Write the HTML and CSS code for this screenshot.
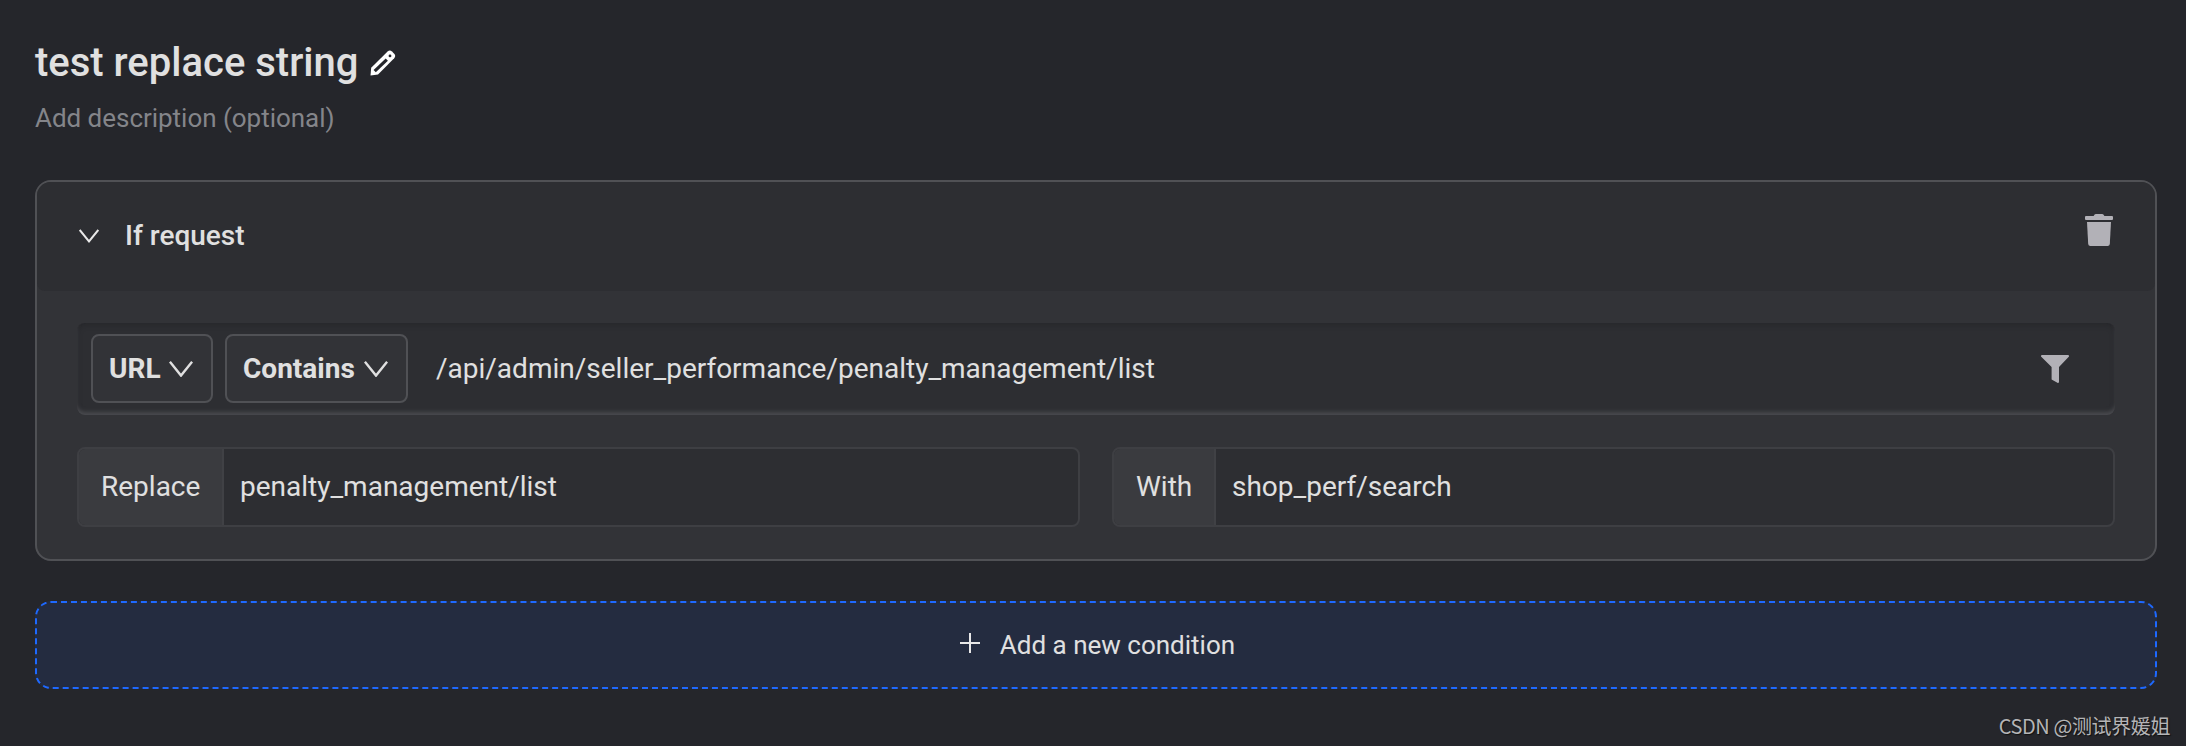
FILE: index.html
```html
<!DOCTYPE html>
<html>
<head>
  <meta charset="UTF-8" />
  <title>test replace string</title>
  <link rel="stylesheet" href="styles.css">
</head>
<body>
  <header class="rule-header">
    <div class="rule-name">
      <h1>test replace string</h1>
      <svg class="icon-edit" viewBox="0 0 26 26" width="26" height="26">
        <path d="M.5 25.4 L1.2 17.8 L17.6 1.6 Q19.8 -.4 22 1.6 L24.2 3.8 Q26.2 6 24.2 8.2 L8 24.4 Z" />
        <path class="slot" d="M4.7 21.2 L16.8 9.6" />
        <circle cx="20" cy="5.9" r="1.4" />
      </svg>
    </div>
    <div class="rule-description">Add description (optional)</div>
  </header>

  <section class="card">
    <div class="card-header">
      <svg class="icon-collapse" viewBox="0 0 20 14" width="20" height="14">
        <path d="M.7 1 L10 12.4 L19.3 1" />
      </svg>
      <h2>If request</h2>
      <svg class="icon-trash" viewBox="0 0 28 32" width="28" height="32">
        <path d="M1 2 H8.6 L9.6 .6 Q10 0 10.8 0 H17.2 Q18 0 18.4 .6 L19.4 2 H27 Q28 2 28 3 V5 Q28 6 27 6 H1 Q0 6 0 5 V3 Q0 2 1 2 Z" />
        <path d="M2 8 H26 L24.8 30 Q24.6 32 22.6 32 H5.4 Q3.4 32 3.2 30 Z" />
      </svg>
    </div>
    <div class="card-body">
      <div class="source">
        <button class="select select-key">URL
          <svg viewBox="0 0 24 16" width="24" height="16"><path d="M.9 .8 L12 14.6 L23.1 .8" /></svg>
        </button>
        <button class="select select-operator">Contains
          <svg viewBox="0 0 24 16" width="24" height="16"><path d="M.9 .8 L12 14.6 L23.1 .8" /></svg>
        </button>
        <span class="source-value">/api/admin/seller_performance/penalty_management/list</span>
        <svg class="icon-filter" viewBox="0 0 28 28" width="28" height="28">
          <path d="M1 0 H27 Q28 0 28 1 V1.6 L18 12 V27 Q17.6 28.4 16.4 27.8 L10.6 24.6 V12 L0 1.6 V1 Q0 0 1 0 Z" />
        </svg>
      </div>
      <div class="pairs">
        <div class="input-group">
          <span class="addon addon-replace">Replace</span>
          <span class="value">penalty_management/list</span>
        </div>
        <div class="input-group">
          <span class="addon addon-with">With</span>
          <span class="value">shop_perf/search</span>
        </div>
      </div>
    </div>
  </section>

  <button class="add-condition">
    <svg viewBox="0 0 20 20" width="20" height="20"><path d="M10 0 V20 M0 10 H20" /></svg>
    <span>Add a new condition</span>
  </button>

  <footer class="watermark">CSDN @测试界媛姐</footer>
</body>
</html>
```

FILE: styles.css
```css
* {
  box-sizing: border-box;
}
body {
  margin: 0;
  padding: 35px 29px 0 35px;
  height: 746px;
  overflow: hidden;
  background: #25262b;
  color: #e0e0e0;
  font-family: Roboto, "Noto Sans CJK SC", sans-serif;
  font-size: 28px;
}
h1, h2 {
  margin: 0;
  font-weight: 500;
}
button {
  margin: 0;
  font: inherit;
  color: inherit;
}
svg {
  display: block;
  flex-shrink: 0;
}

.rule-name {
  display: flex;
  align-items: center;
  height: 56px;
}
.rule-name > h1 {
  font-size: 40px;
  line-height: 56px;
}
.icon-edit {
  margin-left: 12px;
  fill: #fff;
}
.icon-edit > .slot {
  stroke: #25262b;
  stroke-width: 3.2;
}
.icon-edit > circle {
  fill: #25262b;
}
.rule-description {
  margin-top: 8px;
  font-size: 26px;
  line-height: 38px;
  letter-spacing: -0.03px;
  color: #84858a;
}

.card {
  margin: 43px 0 0;
  width: 2122px;
  height: 381px;
  border: 2px solid #505155;
  border-radius: 16px;
  background: #323337;
  overflow: hidden;
}
.card-header {
  display: flex;
  align-items: center;
  height: 109px;
  padding: 0 42px 2px;
  background: #2d2e32;
  border-radius: 0 0 8px 8px;
}
.card-header > h2 {
  margin-left: 26px;
  font-size: 28px;
  line-height: 40px;
}
.icon-collapse {
  fill: none;
  stroke: #e8e8e8;
  stroke-width: 2;
}
.icon-trash {
  margin: 0 0 12px auto;
  fill: #b2b1b7;
}
.card-body {
  padding: 32px 40px;
}

.source {
  display: flex;
  align-items: center;
  height: 92px;
  padding: 0 46px 1px 14px;
  border-radius: 8px;
  background: #2d2e32;
  box-shadow: inset 0 -4px 4px -1px #4a4b4f, inset 0 2px 6px rgba(0, 0, 0, 0.15);
}
.select {
  display: flex;
  align-items: center;
  height: 69px;
  margin-right: 12px;
  padding: 0 18px 0 16px;
  border: 2px solid #505155;
  border-radius: 8px;
  background: #323337;
  font-weight: 700;
}
.select > svg {
  margin: 0 0 0 auto;
  fill: none;
  stroke: #e0e0e0;
  stroke-width: 2.4;
}
.select-key {
  width: 122px;
}
.select-operator {
  width: 183px;
}
.source-value {
  margin-left: 16px;
}
.icon-filter {
  margin-left: auto;
  fill: #b2b1b7;
}

.pairs {
  display: grid;
  grid-template-columns: 1fr 1fr;
  gap: 32px;
  margin-top: 32px;
}
.input-group {
  display: flex;
  height: 80px;
  border: 2px solid #3e3f43;
  border-radius: 8px;
  background: #2d2e32;
  line-height: 76px;
  overflow: hidden;
}
.addon {
  padding-left: 22px;
  border-right: 2px solid #404145;
  background: #3a3b3f;
}
.addon-replace {
  width: 145px;
}
.addon-with {
  width: 102px;
}
.value {
  padding-left: 16px;
}

.add-condition {
  display: flex;
  align-items: center;
  justify-content: center;
  gap: 20px;
  width: 2122px;
  height: 88px;
  margin-top: 40px;
  padding: 0 0 0 3px;
  border: 2px dashed #1e69ff;
  border-radius: 16px;
  background: #242c40;
  font-size: 26px;
}
.add-condition > svg {
  margin-bottom: 4px;
  fill: none;
  stroke: #e8e8e8;
  stroke-width: 2;
}

.watermark {
  margin: 22px -13px 0 0;
  font-family: "Noto Sans CJK SC", sans-serif;
  font-size: 20px;
  line-height: 30px;
  letter-spacing: -0.4px;
  text-align: right;
  color: #b4b4b6;
  text-shadow: 1px 1px 1px #111;
}
```
